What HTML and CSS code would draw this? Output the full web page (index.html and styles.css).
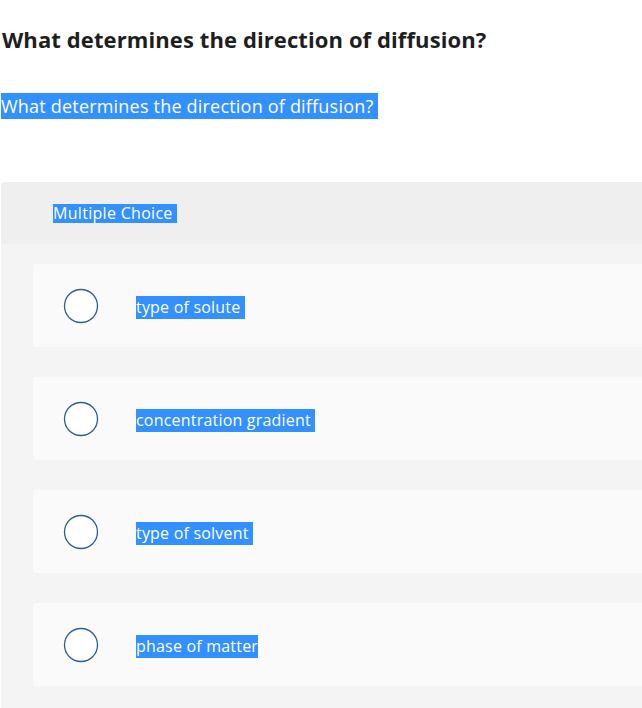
FILE: index.html
```html
<!DOCTYPE html>
<html lang="en">
<head>
<meta charset="utf-8">
<title>Question</title>
<link rel="stylesheet" href="styles.css">
</head>
<body>
<h1 class="title">What determines the direction of diffusion?</h1>
<p class="prompt"><span class="sel">What determines the direction of diffusion? </span></p>
<section class="panel">
  <div class="panel-head"><span class="sel sel-sm">Multiple Choice </span></div>
  <div class="options">
    <label class="option">
      <svg class="radio" width="36" height="36" viewBox="0 0 36 36"><circle cx="18" cy="18" r="16.5" fill="#fff" stroke="#2b5d8e" stroke-width="1.3"/></svg>
      <span class="sel sel-opt">type of solute </span>
    </label>
    <label class="option">
      <svg class="radio" width="36" height="36" viewBox="0 0 36 36"><circle cx="18" cy="18" r="16.5" fill="#fff" stroke="#2b5d8e" stroke-width="1.3"/></svg>
      <span class="sel sel-opt">concentration gradient </span>
    </label>
    <label class="option">
      <svg class="radio" width="36" height="36" viewBox="0 0 36 36"><circle cx="18" cy="18" r="16.5" fill="#fff" stroke="#2b5d8e" stroke-width="1.3"/></svg>
      <span class="sel sel-opt">type of solvent </span>
    </label>
    <label class="option">
      <svg class="radio" width="36" height="36" viewBox="0 0 36 36"><circle cx="18" cy="18" r="16.5" fill="#fff" stroke="#2b5d8e" stroke-width="1.3"/></svg>
      <span class="sel sel-opt">phase of matter</span>
    </label>
  </div>
</section>
</body>
</html>
```

FILE: styles.css
```css
html, body {
  margin: 0;
  padding: 0;
  background: #ffffff;
}
body {
  font-family: "Open Sans", Lato, Arial, sans-serif;
  color: #1c1c1c;
  width: 642px;
  height: 708px;
  overflow: hidden;
}
.title {
  margin: 0;
  padding: 26px 0 1px 2px;
  font-size: 22px;
  line-height: 26px;
  font-weight: 700;
  letter-spacing: 0.1px;
  color: #1e1e1e;
}
.prompt {
  margin: 0;
  padding: 40px 0 0 1px;
  font-size: 18px;
  line-height: 26px;
  letter-spacing: 0.2px;
}
.sel {
  display: inline-block;
  background: #3390ff;
  color: #ffffff;
  white-space: pre;
}
.panel {
  margin: 63px 0 0 1px;
  background: #f4f4f4;
  border-radius: 4px 0 0 0;
  padding-bottom: 40px;
}
.panel-head {
  height: 62px;
  background: #efefef;
  border-radius: 4px 0 0 0;
  display: flex;
  align-items: center;
  padding-left: 52px;
}
.sel-sm {
  font-size: 16px;
  line-height: 19px;
  letter-spacing: 0.3px;
}
.options {
  display: flex;
  flex-direction: column;
  gap: 30px;
  padding: 20px 0 0 32px;
}
.option {
  height: 83px;
  background: #fafafa;
  border-radius: 3px 0 0 3px;
  display: flex;
  align-items: center;
  padding-left: 30px;
  gap: 37px;
}
.radio {
  flex: none;
  display: block;
}
.sel-opt {
  font-size: 16px;
  line-height: 23px;
  letter-spacing: 0.2px;
  margin-top: 4px;
}
```
